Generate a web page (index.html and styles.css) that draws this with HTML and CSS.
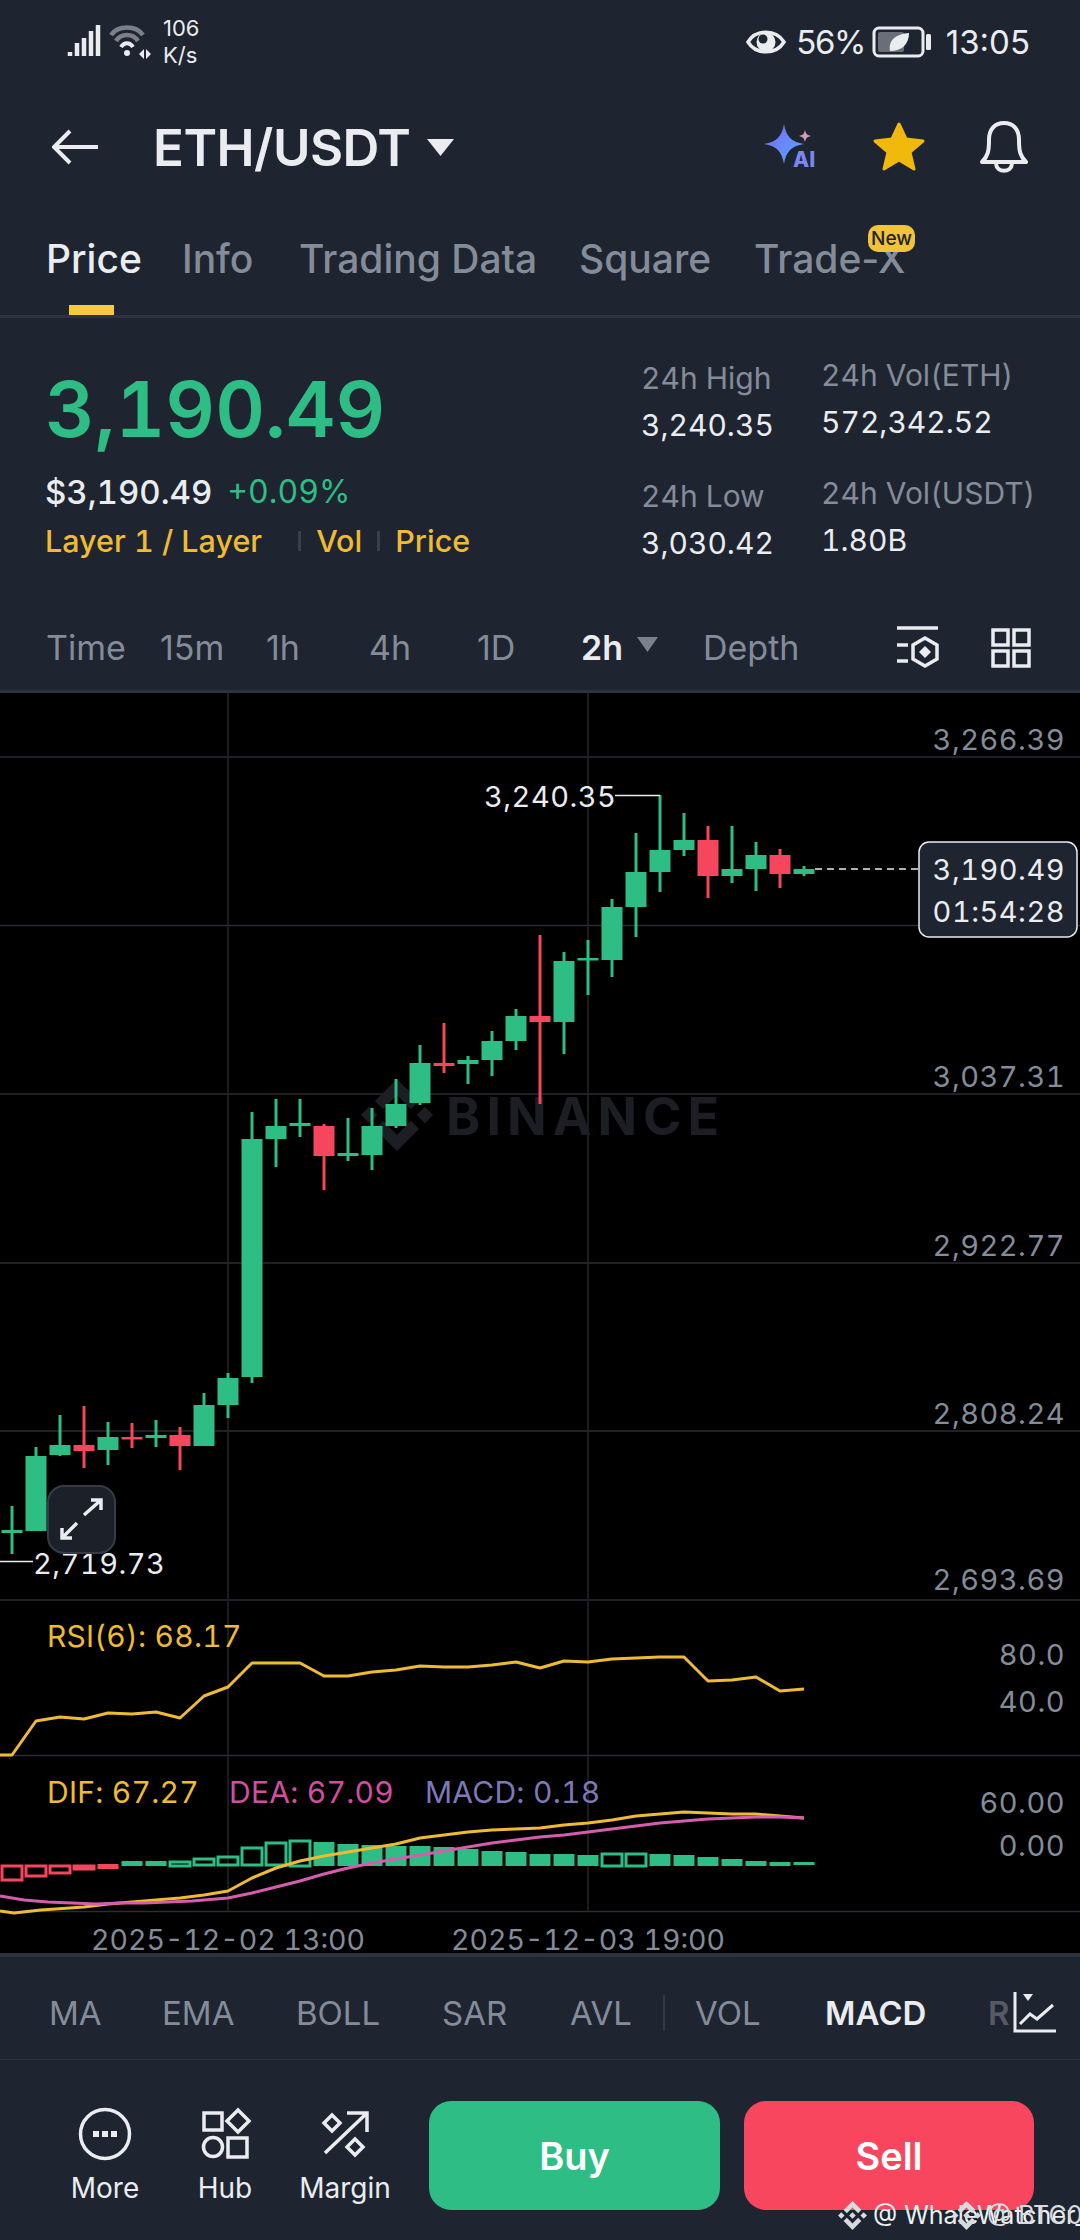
FILE: index.html
```html
<!DOCTYPE html>
<html lang="en">
<head>
    <meta charset="UTF-8">
    <title>ETH/USDT</title>
    <link rel="stylesheet" href="styles.css">
</head>
<body>
<div class="page">

    <!-- Status bar -->
    <div class="statusbar">
        <div class="status-left">
            <svg class="signal" width="36" height="36" viewBox="0 0 36 36">
                <path d="M4 28v4M11 19v13M18 14v18M25 7v25M32 1v31" stroke="#eaecef" stroke-width="4.5" fill="none"/>
            </svg>
            <svg class="wifi" width="42" height="36" viewBox="0 0 42 36">
                <path d="M2 11C9 1 27 1 34 11" stroke="#7b7f87" stroke-width="4.5" fill="none"/>
                <path d="M7 17C12 9 24 9 29 17" stroke="#7b7f87" stroke-width="4.5" fill="none"/>
                <path d="M12 23C15 18 21 18 24 23" stroke="#eaecef" stroke-width="4" fill="none"/>
                <circle cx="18" cy="29" r="3" fill="#eaecef"/>
                <path d="M30 30l5-5v10zM37 25l5 5-5 5z" fill="#eaecef"/>
            </svg>
            <div class="speed">106<br>K/s</div>
        </div>
        <div class="status-right">
            <svg width="40" height="30" viewBox="0 0 40 30">
                <path d="M2 15C10 2 30 2 38 15C30 28 10 28 2 15Z" stroke="#eaecef" stroke-width="3.5" fill="none"/>
                <circle cx="20" cy="15" r="9.5" fill="#eaecef"/>
                <circle cx="17" cy="12" r="4.5" fill="#1e2530"/>
            </svg>
            <span class="batt-num">56%</span>
            <svg class="battery" width="60" height="32" viewBox="0 0 60 32">
                <rect x="2" y="2" width="49" height="28" rx="5" stroke="#eaecef" stroke-width="3" fill="none"/>
                <rect x="6" y="6" width="26" height="20" rx="2" fill="#6a6e78"/>
                <path d="M18 25C16 14 24 8 37 7C37 18 30 25 18 25Z" fill="#eaecef"/>
                <rect x="54" y="8" width="5" height="16" rx="1.5" fill="#eaecef"/>
            </svg>
            <span class="clock">13:05</span>
        </div>
    </div>

    <!-- Header -->
    <div class="header">
        <svg class="back" width="46" height="36" viewBox="0 0 46 36">
            <path d="M18 2L2 18L18 34M2 18H46" stroke="#eaecef" stroke-width="4" fill="none"/>
        </svg>
        <h1 class="pair">ETH/USDT</h1>
        <svg class="pair-caret" width="27" height="17" viewBox="0 0 27 17"><path d="M0 0H27L13.5 17Z" fill="#eaecef"/></svg>
        <div class="header-icons">
            <svg width="56" height="52" viewBox="0 0 56 52">
                <defs>
                    <linearGradient id="aiStar" x1="0" y1="0" x2="1" y2="1">
                        <stop offset="0" stop-color="#7c66f5"/>
                        <stop offset="1" stop-color="#55aaff"/>
                    </linearGradient>
                </defs>
                <path d="M20 3C22 15 27 21 40 23C27 25 22 31 20 43C18 31 13 25 0 23C13 21 18 15 20 3Z" fill="url(#aiStar)"/>
                <path d="M41 9C42 13 43 14 47 15C43 16 42 17 41 21C40 17 39 16 35 15C39 14 40 13 41 9Z" fill="#d59ab8"/>
                <text class="ai-mark" x="29" y="46">AI</text>
            </svg>
            <svg width="54" height="52" viewBox="0 0 54 52">
                <path d="M27 3L34 18L51 20L38 31L42 48L27 39L12 48L16 31L3 20L20 18Z" fill="#f0b90b" stroke="#f0b90b" stroke-width="3" stroke-linejoin="round"/>
            </svg>
            <svg width="52" height="54" viewBox="0 0 52 54">
                <path d="M4 42C10 36 11 31 11 20C11 9 17 3 26 3C35 3 41 9 41 20C41 31 42 36 48 42Z" stroke="#eaecef" stroke-width="4" stroke-linejoin="round" fill="none"/>
                <path d="M18 44C19 53 33 53 34 44" stroke="#eaecef" stroke-width="4" fill="none"/>
            </svg>
        </div>
    </div>

    <!-- Tabs -->
    <div class="tabs">
        <div class="tab active">Price</div>
        <div class="tab">Info</div>
        <div class="tab">Trading Data</div>
        <div class="tab">Square</div>
        <div class="tab">Trade-X<span class="badge-new">New</span></div>
    </div>

    <!-- Price summary -->
    <div class="summary">
        <div class="price-block">
            <div class="last-price">3,190.49</div>
            <div class="price-sub"><span class="usd">$3,190.49</span><span class="change">+0.09%</span></div>
            <div class="tags">
                <span class="tag-layer">Layer 1 / Layer</span><span class="tag-sep"></span><span class="tag-vol">Vol</span><span class="tag-sep"></span><span>Price</span>
            </div>
        </div>
        <div class="stat-col stat-high">
            <div class="stat-label">24h High</div>
            <div class="stat-value">3,240.35</div>
            <div class="stat-label next">24h Low</div>
            <div class="stat-value">3,030.42</div>
        </div>
        <div class="stat-col stat-vol">
            <div class="stat-label">24h Vol(ETH)</div>
            <div class="stat-value">572,342.52</div>
            <div class="stat-label next">24h Vol(USDT)</div>
            <div class="stat-value">1.80B</div>
        </div>
    </div>

    <!-- Interval row -->
    <div class="intervals">
        <div class="interval">Time</div>
        <div class="interval">15m</div>
        <div class="interval">1h</div>
        <div class="interval">4h</div>
        <div class="interval">1D</div>
        <div class="interval selected">2h<svg class="interval-caret" width="21" height="15" viewBox="0 0 21 15"><path d="M0 0H21L10.5 15Z" fill="#7c818b"/></svg></div>
        <div class="interval">Depth</div>
        <div class="interval-icons">
            <svg width="43" height="46" viewBox="0 0 43 46">
                <path d="M1 3H42M1 20H12M1 36H12" stroke="#eaecef" stroke-width="3.5" fill="none"/>
                <path d="M29 13L41 20V34L29 41L17 34V20Z" stroke="#eaecef" stroke-width="3.5" fill="none"/>
                <path d="M29 21L35 27L29 33L23 27Z" fill="#eaecef"/>
            </svg>
            <svg width="40" height="40" viewBox="0 0 40 40">
                <path d="M2 2H17V17H2ZM23 2H38V17H23ZM2 23H17V38H2ZM23 23H38V38H23Z" stroke="#eaecef" stroke-width="3.5" fill="none"/>
            </svg>
        </div>
    </div>

    <!-- Chart -->
    <svg class="chart" width="1080" height="1260" viewBox="0 693 1080 1260">
        <path class="grid-h" d="M0 757H1080M0 925.5H1080M0 1094H1080M0 1263H1080M0 1431H1080M0 1600H1080M0 1755.5H1080M0 1911.5H1080"/>
        <path class="grid-v" d="M228 693V1911M588 693V1911"/>

        <path class="bn-mark" transform="translate(361 1079) scale(3)" d="M16.624 13.9202l2.7175 2.7154-7.353 7.353-7.353-7.352 2.7175-2.7164 4.6355 4.6595 4.6356-4.6595zm4.6366-4.6366L24 12l-2.7154 2.7164L18.5682 12l2.6924-2.7164zm-9.272.001l2.7163 2.6914-2.7164 2.7174v-.001L9.2721 12l2.7164-2.7154zm-9.2722-.001L5.4088 12l-2.6914 2.6924L0 12l2.7164-2.7164zM11.9885.0115l7.353 7.329-2.7174 2.7154-4.6356-4.6356-4.6355 4.6595-2.7174-2.7154 7.353-7.353z"/>
        <text class="bn-word" x="446" y="1135">BINANCE</text>

        <!-- candles: wicks then bodies -->
        <path class="wick up" d="M12 1506V1554M36 1447V1531M60 1415V1456M108 1422V1465M156 1420V1447M204 1393V1446M228 1373V1418M252 1112V1383M276 1099V1167M300 1099V1137M348 1118V1161M372 1108V1170M396 1079V1128M420 1045V1105M468 1056V1084M492 1031V1076M516 1009V1050M564 952V1054M588 940V995M612 899V977M636 833V937M660 795V892M684 813V856M732 826V883M756 842V891M804 866V876"/>
        <path class="wick down" d="M84 1406V1468M132 1423V1448M180 1427V1470M324 1124V1190M444 1023V1073M540 935V1104M708 826V898M780 849V888"/>
        <path class="body up" d="M12 1530V1533M36 1456V1531M60 1445V1455M108 1437V1450M156 1435V1438M204 1405V1446M228 1378V1405M252 1139V1377M276 1126V1139M300 1123V1126M348 1153V1156M372 1126V1155M396 1104V1126M420 1063V1103M468 1060V1064M492 1041V1060M516 1016V1041M564 961V1022M588 958V960.5M612 907V960M636 872V907M660 850V872M684 840V850M732 869V876M756 855V869M804 869V874"/>
        <path class="body down" d="M84 1445V1451M132 1437V1439.5M180 1435V1446M324 1126V1156M444 1063V1066M540 1016V1022M708 840V876M780 855V874"/>

        <!-- price axis -->
        <text class="axis" x="1065" y="750">3,266.39</text>
        <text class="axis" x="1065" y="1087">3,037.31</text>
        <text class="axis" x="1065" y="1256">2,922.77</text>
        <text class="axis" x="1065" y="1424">2,808.24</text>
        <text class="axis" x="1065" y="1590">2,693.69</text>

        <!-- high / low marks -->
        <path class="mark-line" d="M615 795.5H660M0 1561.5H33"/>
        <text class="mark" x="484" y="807">3,240.35</text>
        <text class="mark" x="33" y="1574">2,719.73</text>

        <!-- last price -->
        <path class="last-line" d="M815 869H918"/>
        <rect class="last-box" x="919" y="842" width="158" height="95" rx="10"/>
        <text class="mark end" x="1065" y="880">3,190.49</text>
        <text class="mark end" x="1065" y="922">01:54:28</text>

        <!-- expand button -->
        <rect class="expand-box" x="48" y="1486" width="67" height="67" rx="16"/>
        <path class="expand-arrow" d="M84 1515L101 1500M91 1500H101V1510M77 1523L62 1538M62 1528V1538H72"/>

        <!-- RSI -->
        <text class="legend rsi" x="47" y="1647">RSI(6): 68.17</text>
        <text class="axis" x="1065" y="1665">80.0</text>
        <text class="axis" x="1065" y="1712">40.0</text>
        <polyline class="line rsi-line" points="0,1755 12,1755 36,1721 60,1717 84,1719 108,1713 132,1714 156,1712 180,1718 204,1696 228,1687 252,1663 276,1663 300,1663 324,1676 348,1676 372,1672 396,1670 420,1666 444,1667 468,1667 492,1665 516,1662 540,1668 564,1661 588,1662 612,1659 636,1658 660,1657 684,1657 708,1681 732,1680 756,1677 780,1691 804,1689"/>

        <!-- MACD -->
        <text class="legend rsi" x="47" y="1803">DIF: 67.27</text>
        <text class="legend dea" x="229" y="1803">DEA: 67.09</text>
        <text class="legend macd" x="425" y="1803">MACD: 0.18</text>
        <text class="axis" x="1065" y="1813">60.00</text>
        <text class="axis" x="1065" y="1856">0.00</text>
        <path class="hist-hollow down" d="M2 1866H22V1880H2ZM26 1866H46V1876H26ZM50 1866H70V1873H50ZM74 1866H94V1869H74Z"/>
        <path class="hist-solid down" d="M108 1864V1869"/>
        <path class="hist-solid up" d="M132 1861V1866M156 1861V1866M324 1842V1866M348 1844V1866M372 1845V1866M396 1846V1866M420 1846V1866M444 1847V1866M468 1849V1866M492 1851V1866M516 1852V1866M540 1854V1866M564 1854V1866M588 1855V1866M660 1854V1866M684 1855V1866M708 1857V1866M732 1859V1866M756 1861V1866M780 1862V1866M804 1862V1865"/>
        <path class="hist-hollow up" d="M170 1862H190V1866H170ZM194 1859H214V1865H194ZM218 1857H238V1865H218ZM242 1848H262V1865H242ZM266 1843H286V1865H266ZM290 1841H310V1866H290ZM602 1854H622V1866H602ZM626 1854H646V1866H626Z"/>
        <polyline class="line dif-line" points="0,1911 14,1913 41,1910 84,1907 108,1904 132,1902 156,1900 180,1898 204,1895 228,1891 252,1878 276,1868 300,1861 324,1856 348,1852 372,1848 396,1844 420,1838 444,1835 468,1832 492,1830 516,1829 540,1828 564,1825 588,1823 612,1820 636,1816 660,1814 684,1812 708,1813 732,1814 756,1814 780,1816 804,1818"/>
        <polyline class="line dea-line" points="0,1896 24,1900 48,1902 72,1903 96,1904 120,1903 144,1903 168,1902 192,1901 228,1898 252,1893 276,1887 300,1881 324,1874 348,1868 372,1863 396,1859 420,1855 444,1851 468,1847 492,1843 516,1840 540,1837 564,1835 588,1832 612,1829 636,1826 660,1823 684,1821 708,1819 732,1818 756,1817 780,1817 804,1818"/>

        <!-- time axis -->
        <text class="axis-time" x="228" y="1950">2025-12-02 13:00</text>
        <text class="axis-time" x="588" y="1950">2025-12-03 19:00</text>
    </svg>

    <!-- Indicators -->
    <div class="indicators">
        <div class="indicator">MA</div>
        <div class="indicator">EMA</div>
        <div class="indicator">BOLL</div>
        <div class="indicator">SAR</div>
        <div class="indicator">AVL</div>
        <div class="indicator-sep"></div>
        <div class="indicator">VOL</div>
        <div class="indicator selected">MACD</div>
        <div class="indicator faded">R</div>
        <svg class="indicator-icon" width="44" height="44" viewBox="0 0 44 44">
            <path d="M2 1V40H43" stroke="#eaecef" stroke-width="3" fill="none"/>
            <path d="M10 3H20L15 10Z" fill="#eaecef"/>
            <path d="M7 33L17 23L24 28L40 14" stroke="#eaecef" stroke-width="3" fill="none"/>
        </svg>
    </div>

    <!-- Footer actions -->
    <div class="footer">
        <div class="nav-item">
            <svg width="60" height="60" viewBox="0 0 60 60">
                <circle cx="30" cy="30" r="24.5" stroke="#eaecef" stroke-width="3.5" fill="none"/>
                <path d="M18 27h6v6h-6zM27 27h6v6h-6zM36 27h6v6h-6z" fill="#eaecef"/>
            </svg>
            <span>More</span>
        </div>
        <div class="nav-item">
            <svg width="60" height="60" viewBox="0 0 60 60">
                <path d="M9 9H27V26H9ZM33 34H52V53H33Z" stroke="#eaecef" stroke-width="3.5" fill="none"/>
                <path d="M43 6L54 17L43 28L32 17Z" stroke="#eaecef" stroke-width="3.5" fill="none"/>
                <circle cx="18" cy="43" r="9.5" stroke="#eaecef" stroke-width="3.5" fill="none"/>
            </svg>
            <span>Hub</span>
        </div>
        <div class="nav-item">
            <svg width="60" height="60" viewBox="0 0 60 60">
                <path d="M10 49L52 9M32 9H52V28" stroke="#eaecef" stroke-width="3.5" fill="none"/>
                <path d="M17 11L25 19L17 27L9 19ZM40 35L48 43L40 51L32 43Z" stroke="#eaecef" stroke-width="3.5" fill="none"/>
            </svg>
            <span>Margin</span>
        </div>
        <div class="trade-btn buy">Buy</div>
        <div class="trade-btn sell">Sell</div>
    </div>

    <!-- Post watermark, two of them stamped over each other -->
    <div class="wm wm-first">
        <svg class="wm-logo" width="29" height="29" viewBox="0 0 24 24"><path d="M16.624 13.9202l2.7175 2.7154-7.353 7.353-7.353-7.352 2.7175-2.7164 4.6355 4.6595 4.6356-4.6595zm4.6366-4.6366L24 12l-2.7154 2.7164L18.5682 12l2.6924-2.7164zm-9.272.001l2.7163 2.6914-2.7164 2.7174v-.001L9.2721 12l2.7164-2.7154zm-9.2722-.001L5.4088 12l-2.6914 2.6924L0 12l2.7164-2.7164zM11.9885.0115l7.353 7.329-2.7174 2.7154-4.6356-4.6356-4.6355 4.6595-2.7174-2.7154 7.353-7.353z"/></svg>
        <span>@ WhaleWatcher_</span>
    </div>
    <div class="wm wm-second">
        <svg class="wm-logo" width="29" height="29" viewBox="0 0 24 24"><path d="M16.624 13.9202l2.7175 2.7154-7.353 7.353-7.353-7.352 2.7175-2.7164 4.6355 4.6595 4.6356-4.6595zm4.6366-4.6366L24 12l-2.7154 2.7164L18.5682 12l2.6924-2.7164zm-9.272.001l2.7163 2.6914-2.7164 2.7174v-.001L9.2721 12l2.7164-2.7154zm-9.2722-.001L5.4088 12l-2.6914 2.6924L0 12l2.7164-2.7164zM11.9885.0115l7.353 7.329-2.7174 2.7154-4.6356-4.6356-4.6355 4.6595-2.7174-2.7154 7.353-7.353z"/></svg>
        <span>@ BTC0</span>
    </div>

</div>
</body>
</html>
```
FILE: styles.css
```css
* {
    margin: 0;
    padding: 0;
    box-sizing: border-box;
    font-family: Inter, "Liberation Sans", sans-serif;
}

:root {
    --bg: #1e2530;
    --text: #eaecef;
    --muted: #848c9a;
    --yellow: #eebb32;
    --green: #2ebd85;
    --red: #f6465d;
    --line: #2c333e;
}

body {
    background-color: var(--bg);
    color: var(--text);
}

.page {
    position: relative;
    width: 1080px;
    height: 2240px;
    overflow: hidden;
}

/* Status bar */
.statusbar {
    height: 84px;
    display: flex;
    justify-content: space-between;
    align-items: center;
    padding: 0 50px 0 66px;
}

.status-left,
.status-right {
    display: flex;
    align-items: center;
}

.wifi {
    margin-left: 7px;
}

.speed {
    margin-left: 12px;
    font-size: 22px;
    line-height: 27px;
}

.batt-num {
    margin-left: 10px;
    font-size: 33px;
    letter-spacing: -1.5px;
}

.battery {
    margin-left: 7px;
}

.clock {
    margin-left: 14px;
    font-size: 33px;
}

/* Header */
.header {
    height: 126px;
    display: flex;
    align-items: center;
    padding: 0 50px 0 52px;
}

.pair {
    margin-left: 55px;
    font-size: 51px;
    font-weight: 600;
    letter-spacing: -0.5px;
}

.pair-caret {
    margin-left: 16px;
}

.header-icons {
    margin-left: auto;
    display: flex;
    align-items: center;
    gap: 52px;
}

.ai-mark {
    font-size: 21px;
    font-weight: 800;
    fill: #7c86f2;
}

/* Tabs */
.tabs {
    height: 108px;
    display: grid;
    grid-template-columns: 136px 117px 280px 175px 1fr;
    padding-left: 46px;
    border-bottom: 3px solid var(--line);
}

.tab {
    position: relative;
    font-size: 39px;
    line-height: 98px;
    color: var(--muted);
    font-weight: 500;
}

.tab.active {
    color: var(--text);
}

.tab.active::after {
    content: "";
    position: absolute;
    left: 23px;
    bottom: 0;
    width: 45px;
    height: 10px;
    background-color: #f7c93c;
}

.badge-new {
    position: absolute;
    left: 114px;
    top: 15px;
    width: 47px;
    height: 27px;
    border-radius: 10px;
    background-color: #f0c33a;
    color: #1e2329;
    font-size: 19px;
    font-weight: 500;
    line-height: 27px;
    text-align: center;
}

/* Price summary */
.summary {
    height: 288px;
    display: flex;
    padding-left: 45px;
    font-variant-numeric: tabular-nums;
}

.price-block {
    width: 596px;
    padding-top: 46px;
}

.last-price {
    font-size: 77px;
    font-weight: 600;
    line-height: 90px;
    color: var(--green);
}

.price-sub {
    margin-top: 18px;
    display: flex;
    gap: 15px;
    font-size: 33px;
    line-height: 40px;
}

.usd {
    font-weight: 500;
}

.change {
    color: var(--green);
    font-size: 32px;
}

.tags {
    margin-top: 9px;
    display: flex;
    align-items: center;
    font-size: 30.5px;
    font-weight: 500;
    line-height: 40px;
    color: var(--yellow);
}

.tag-sep {
    width: 3px;
    height: 20px;
    margin: 0 15px;
    background-color: #3a404b;
}

.tag-layer {
    margin-right: 21px;
}

.stat-col {
    font-size: 30px;
    line-height: 44px;
}

.stat-high {
    width: 180px;
    padding-top: 38px;
}

.stat-vol {
    padding-top: 35px;
}

.stat-label {
    color: var(--muted);
}

.stat-label.next {
    margin-top: 27px;
}

.stat-value {
    margin-top: 3px;
}

/* Interval row */
.intervals {
    height: 87px;
    display: grid;
    grid-template-columns: 114px 106px 103px 108px 104px 122px 1fr auto;
    align-items: center;
    padding: 0 49px 1px 46px;
    border-bottom: 3px solid var(--line);
}

.interval {
    font-size: 34px;
    color: var(--muted);
}

.interval.selected {
    color: var(--text);
    font-weight: 600;
    display: flex;
    align-items: center;
}

.interval-caret {
    margin-left: 14px;
    margin-bottom: 6px;
}

.interval-icons {
    display: flex;
    align-items: center;
    gap: 52px;
}

/* Chart */
.chart {
    display: block;
    background-color: #000;
    overflow: visible;
    font-variant-numeric: tabular-nums;
}

.grid-h {
    stroke: #2a2d33;
    stroke-width: 1.5;
    fill: none;
}

.grid-v {
    stroke: #23262d;
    stroke-width: 1.5;
    fill: none;
}

.bn-mark {
    fill: #1c1e23;
}

.bn-word {
    font-size: 52px;
    font-weight: 700;
    letter-spacing: 6px;
    fill: #1c1e23;
}

.wick {
    stroke-width: 3;
    fill: none;
}

.body {
    stroke-width: 21;
    fill: none;
}

.up {
    stroke: var(--green);
}

.down {
    stroke: var(--red);
}

.axis {
    font-size: 29px;
    letter-spacing: 0.5px;
    fill: var(--muted);
    text-anchor: end;
}

.axis-time {
    font-size: 28.5px;
    fill: var(--muted);
    text-anchor: middle;
}

.mark {
    font-size: 29px;
    letter-spacing: 0.5px;
    fill: var(--text);
}

.mark.end {
    text-anchor: end;
}

.mark-line {
    stroke: var(--text);
    stroke-width: 1.5;
    fill: none;
}

.last-line {
    stroke: var(--text);
    stroke-width: 1.5;
    stroke-dasharray: 7 5;
    fill: none;
}

.last-box {
    fill: #1e2530;
    stroke: var(--text);
    stroke-width: 1.5;
}

.expand-box {
    fill: #1c2029;
    stroke: #363b46;
    stroke-width: 2;
}

.expand-arrow {
    stroke: var(--text);
    stroke-width: 3.5;
    fill: none;
}

.legend {
    font-size: 30px;
    letter-spacing: 0.25px;
}

.rsi {
    fill: var(--yellow);
}

.dea {
    fill: #d04fa0;
}

.macd {
    fill: #7f78b8;
}

.line {
    fill: none;
    stroke-width: 3;
    stroke-linejoin: round;
}

.rsi-line,
.dif-line {
    stroke: var(--yellow);
}

.dea-line {
    stroke: #d65cae;
}

.hist-solid {
    stroke-width: 21;
    fill: none;
}

.hist-hollow {
    stroke-width: 3;
    fill: none;
}

/* Indicators */
.indicators {
    height: 107px;
    display: grid;
    grid-template-columns: 113px 134px 146px 128px 93px 32px 130px 163px 25px auto;
    align-items: center;
    padding: 9px 0 0 49px;
    border-top: 4px solid var(--line);
    border-bottom: 1px solid var(--line);
}

.indicator {
    font-size: 33px;
    color: var(--muted);
}

.indicator.selected {
    color: var(--text);
    font-weight: 600;
}

.indicator.faded {
    font-weight: 600;
    color: #555a64;
}

.indicator-sep {
    width: 2px;
    height: 36px;
    background-color: #333945;
}

/* Footer actions */
.footer {
    display: flex;
    padding: 41px 0 0 45px;
}

.nav-item {
    width: 120px;
    display: flex;
    flex-direction: column;
    align-items: center;
    padding-top: 3px;
    font-size: 28px;
    line-height: 34px;
}

.nav-item span {
    margin-top: 7px;
}

.trade-btn {
    height: 109px;
    border-radius: 22px;
    font-size: 38px;
    font-weight: 600;
    line-height: 111px;
    text-align: center;
    color: #fff;
}

.buy {
    width: 291px;
    margin-left: 24px;
    background-color: var(--green);
}

.sell {
    width: 290px;
    margin-left: 24px;
    background-color: #f8465f;
}

/* Watermark over the corner */
.wm {
    position: absolute;
    top: 2200px;
    display: flex;
    align-items: center;
    gap: 6px;
    font-size: 25px;
    line-height: 30px;
    white-space: nowrap;
    color: #eef0f3;
}

.wm-logo {
    fill: #d8dade;
}

.wm-first {
    left: 838px;
}

.wm-second {
    left: 952px;
    color: #d8dade;
}
```
